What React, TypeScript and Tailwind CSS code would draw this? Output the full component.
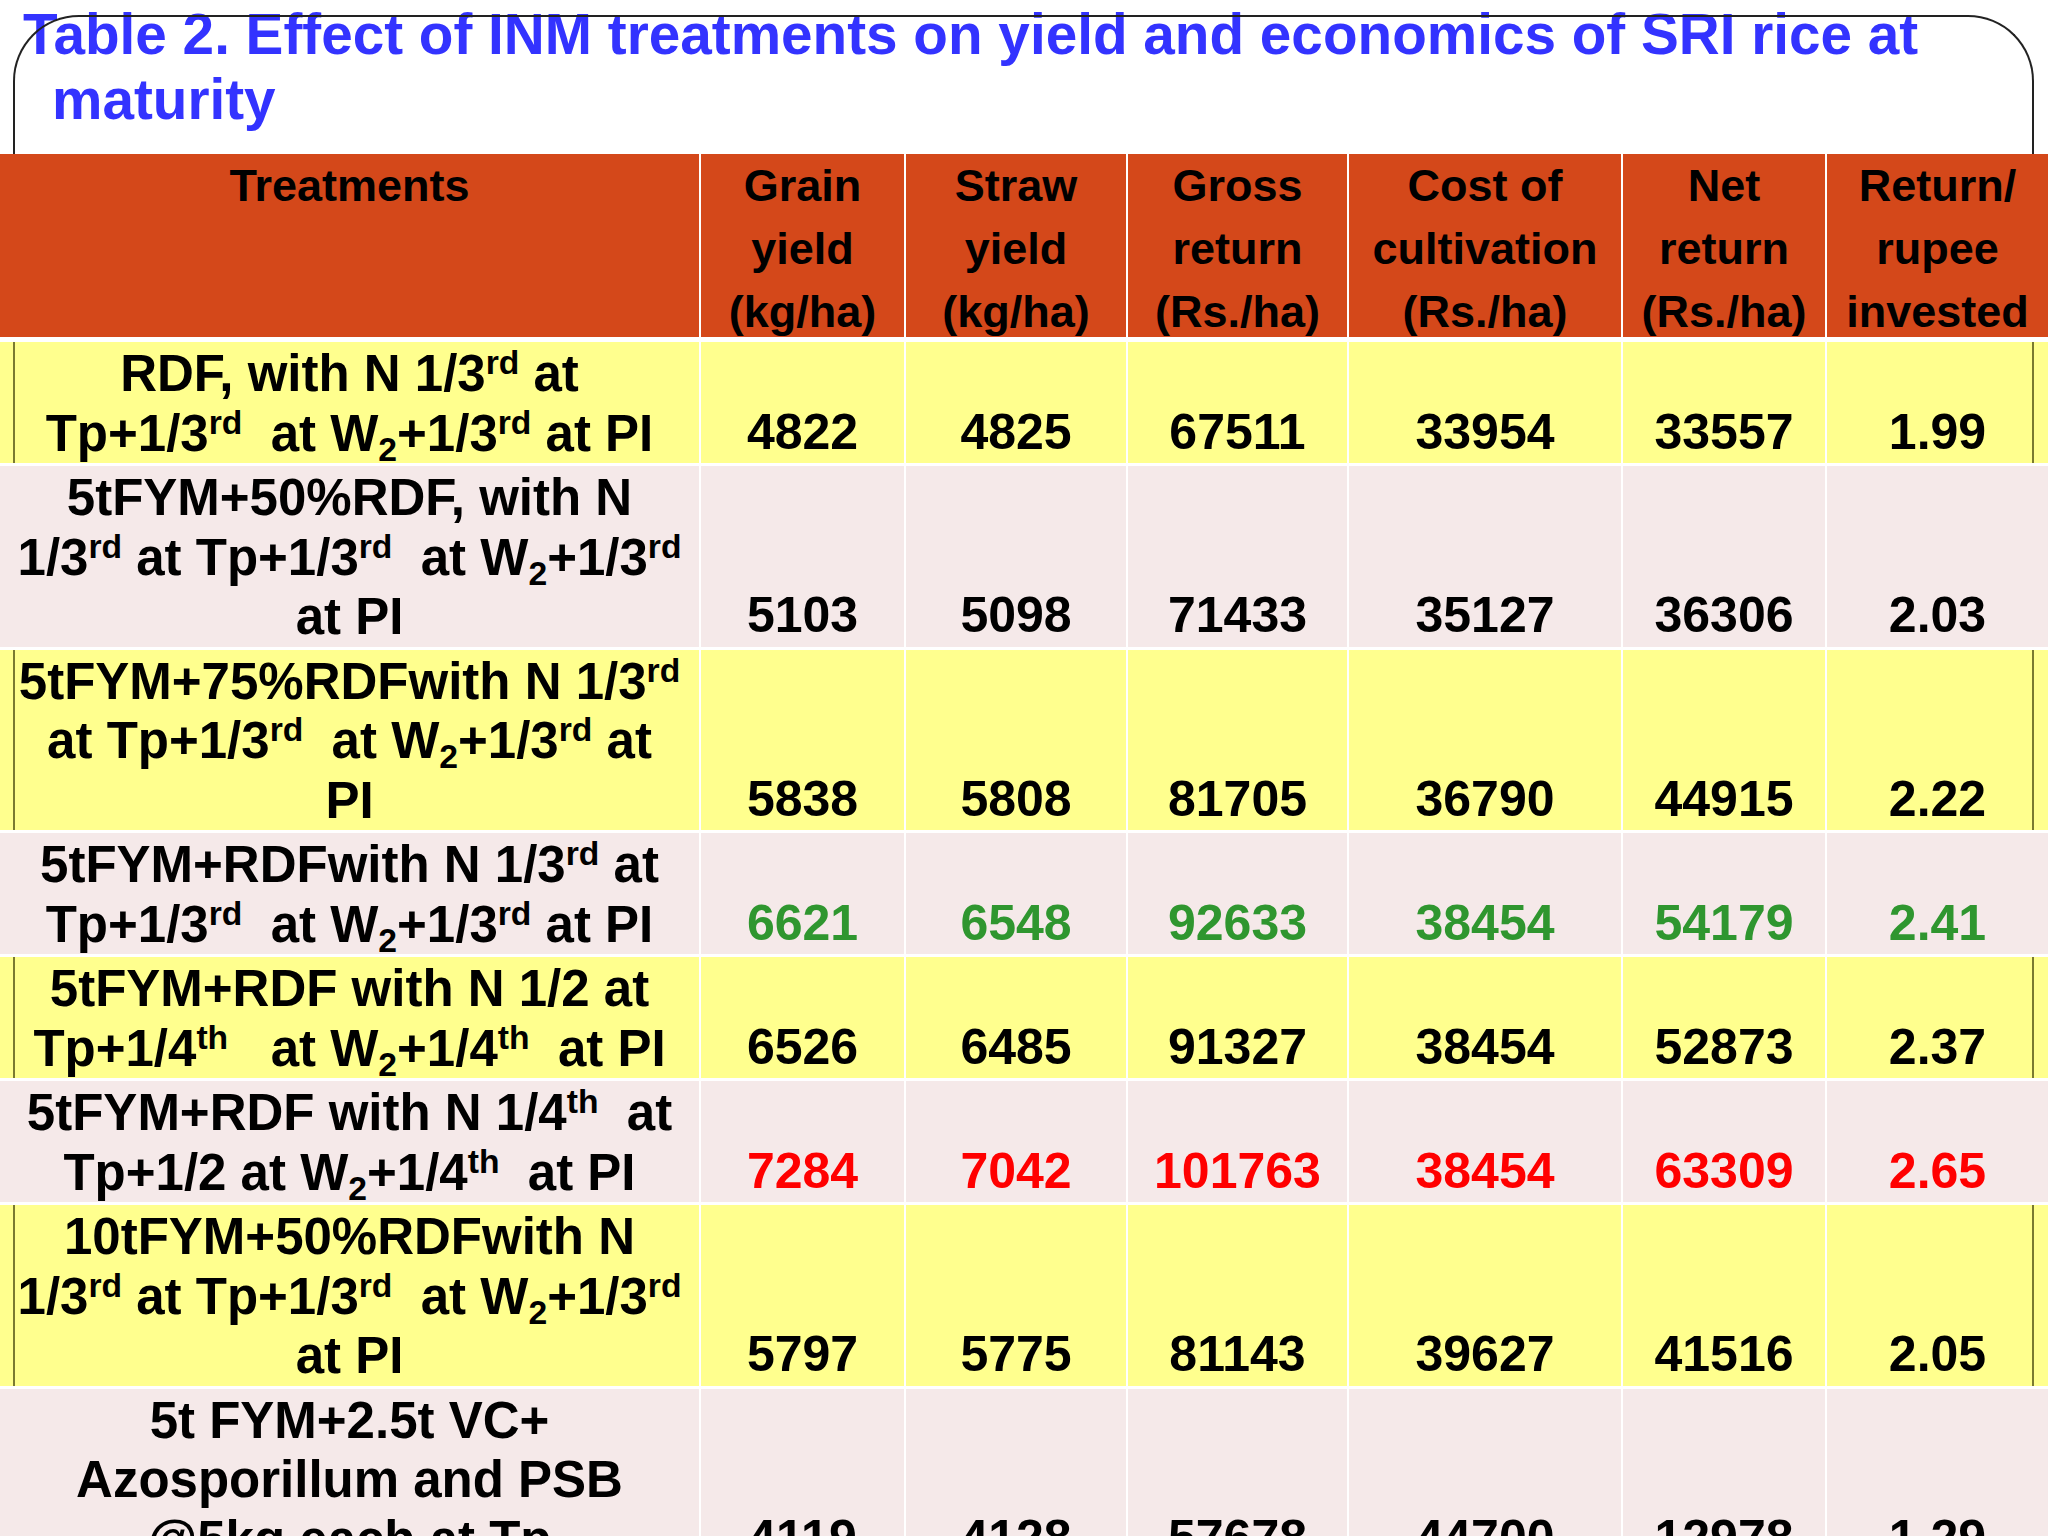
import React from 'react';

const Sup = ({ children }: { children: React.ReactNode }) => (
  <sup className="text-[0.66em] top-[-0.5em]">{children}</sup>
);

const Sub = ({ children }: { children: React.ReactNode }) => (
  <sub className="text-[0.66em] bottom-[-0.3em]">{children}</sub>
);

type Row = {
  lines: React.ReactNode[];
  values: string[];
  tone: 'yellow' | 'pink';
  color?: string;
};

const rd = <Sup>rd</Sup>;
const th = <Sup>th</Sup>;
const w2 = (
  <>
    W<Sub>2</Sub>
  </>
);

const rows: Row[] = [
  {
    tone: 'yellow',
    lines: [
      <>RDF, with N 1/3{rd} at</>,
      <>Tp+1/3{rd}&nbsp; at {w2}+1/3{rd} at PI</>,
    ],
    values: ['4822', '4825', '67511', '33954', '33557', '1.99'],
  },
  {
    tone: 'pink',
    lines: [
      <>5tFYM+50%RDF, with N</>,
      <>1/3{rd} at Tp+1/3{rd}&nbsp; at {w2}+1/3{rd}</>,
      <>at PI</>,
    ],
    values: ['5103', '5098', '71433', '35127', '36306', '2.03'],
  },
  {
    tone: 'yellow',
    lines: [
      <>5tFYM+75%RDFwith N 1/3{rd}</>,
      <>at Tp+1/3{rd}&nbsp; at {w2}+1/3{rd} at</>,
      <>PI</>,
    ],
    values: ['5838', '5808', '81705', '36790', '44915', '2.22'],
  },
  {
    tone: 'pink',
    color: 'text-[#2f962f]',
    lines: [
      <>5tFYM+RDFwith N 1/3{rd} at</>,
      <>Tp+1/3{rd}&nbsp; at {w2}+1/3{rd} at PI</>,
    ],
    values: ['6621', '6548', '92633', '38454', '54179', '2.41'],
  },
  {
    tone: 'yellow',
    lines: [
      <>5tFYM+RDF with N 1/2 at</>,
      <>Tp+1/4{th}&nbsp;&nbsp; at {w2}+1/4{th}&nbsp; at PI</>,
    ],
    values: ['6526', '6485', '91327', '38454', '52873', '2.37'],
  },
  {
    tone: 'pink',
    color: 'text-[#ff0000]',
    lines: [
      <>5tFYM+RDF with N 1/4{th}&nbsp; at</>,
      <>Tp+1/2 at {w2}+1/4{th}&nbsp; at PI</>,
    ],
    values: ['7284', '7042', '101763', '38454', '63309', '2.65'],
  },
  {
    tone: 'yellow',
    lines: [
      <>10tFYM+50%RDFwith N</>,
      <>1/3{rd} at Tp+1/3{rd}&nbsp; at {w2}+1/3{rd}</>,
      <>at PI</>,
    ],
    values: ['5797', '5775', '81143', '39627', '41516', '2.05'],
  },
  {
    tone: 'pink',
    lines: [<>5t FYM+2.5t VC+</>, <>Azosporillum and PSB</>, <>@5kg each at Tp</>],
    values: ['4119', '4128', '57678', '44700', '12978', '1.29'],
  },
];

const headers: string[][] = [
  ['Treatments'],
  ['Grain', 'yield', '(kg/ha)'],
  ['Straw', 'yield', '(kg/ha)'],
  ['Gross', 'return', '(Rs./ha)'],
  ['Cost of', 'cultivation', '(Rs./ha)'],
  ['Net', 'return', '(Rs./ha)'],
  ['Return/', 'rupee', 'invested'],
];

export default function App() {
  return (
    <div className="relative w-[2048px] bg-white font-['Liberation_Sans',Arial,sans-serif] font-bold text-black">
      {/* rounded outline of the slide box */}
      <div className="absolute left-[13px] right-[14px] top-[15px] h-[139px] border-2 border-b-0 border-[#222] rounded-t-[66px]" />

      <h1 className="pt-[2px] mb-[22px] pl-[52px] pr-[20px] indent-[-29px] text-[56.7px] leading-[65px] text-[#3333ff]">
        Table 2. Effect of INM treatments on yield and economics of SRI rice at maturity
      </h1>

      <div className="grid grid-cols-[699px_203px_220px_219px_272px_202px_221px] gap-x-[2px] gap-y-[3px]">
        {headers.map((h, i) => (
          <div key={i} className="bg-[#d4481a] mb-[2px] text-center text-[45px] leading-[63px] h-[183px] overflow-visible">
            {h.map(line => (
              <div key={line} className="whitespace-nowrap">{line}</div>
            ))}
          </div>
        ))}

        {rows.map((row, r) => {
          const bg = row.tone === 'yellow' ? 'bg-[#ffff8e]' : 'bg-[#f5e9e9]';
          const yellow = row.tone === 'yellow';
          return (
            <React.Fragment key={r}>
              <div className={`relative ${bg} pt-[2px] text-center text-[51px] leading-[59.5px]`}>
                {yellow && <span className="absolute left-[13px] inset-y-0 w-[2px] bg-[#7a7a30]" />}
                {row.lines.map((l, k) => (
                  <div key={k} className="whitespace-nowrap">{l}</div>
                ))}
              </div>
              {row.values.map((v, c) => (
                <div
                  key={c}
                  className={`relative ${bg} flex items-end justify-center pb-[1px] text-[50px] leading-[59.5px] ${row.color ?? ''}`}
                >
                  {yellow && c === 5 && <span className="absolute right-[14px] inset-y-0 w-[2px] bg-[#7a7a30]" />}
                  {v}
                </div>
              ))}
            </React.Fragment>
          );
        })}
      </div>
    </div>
  );
}
